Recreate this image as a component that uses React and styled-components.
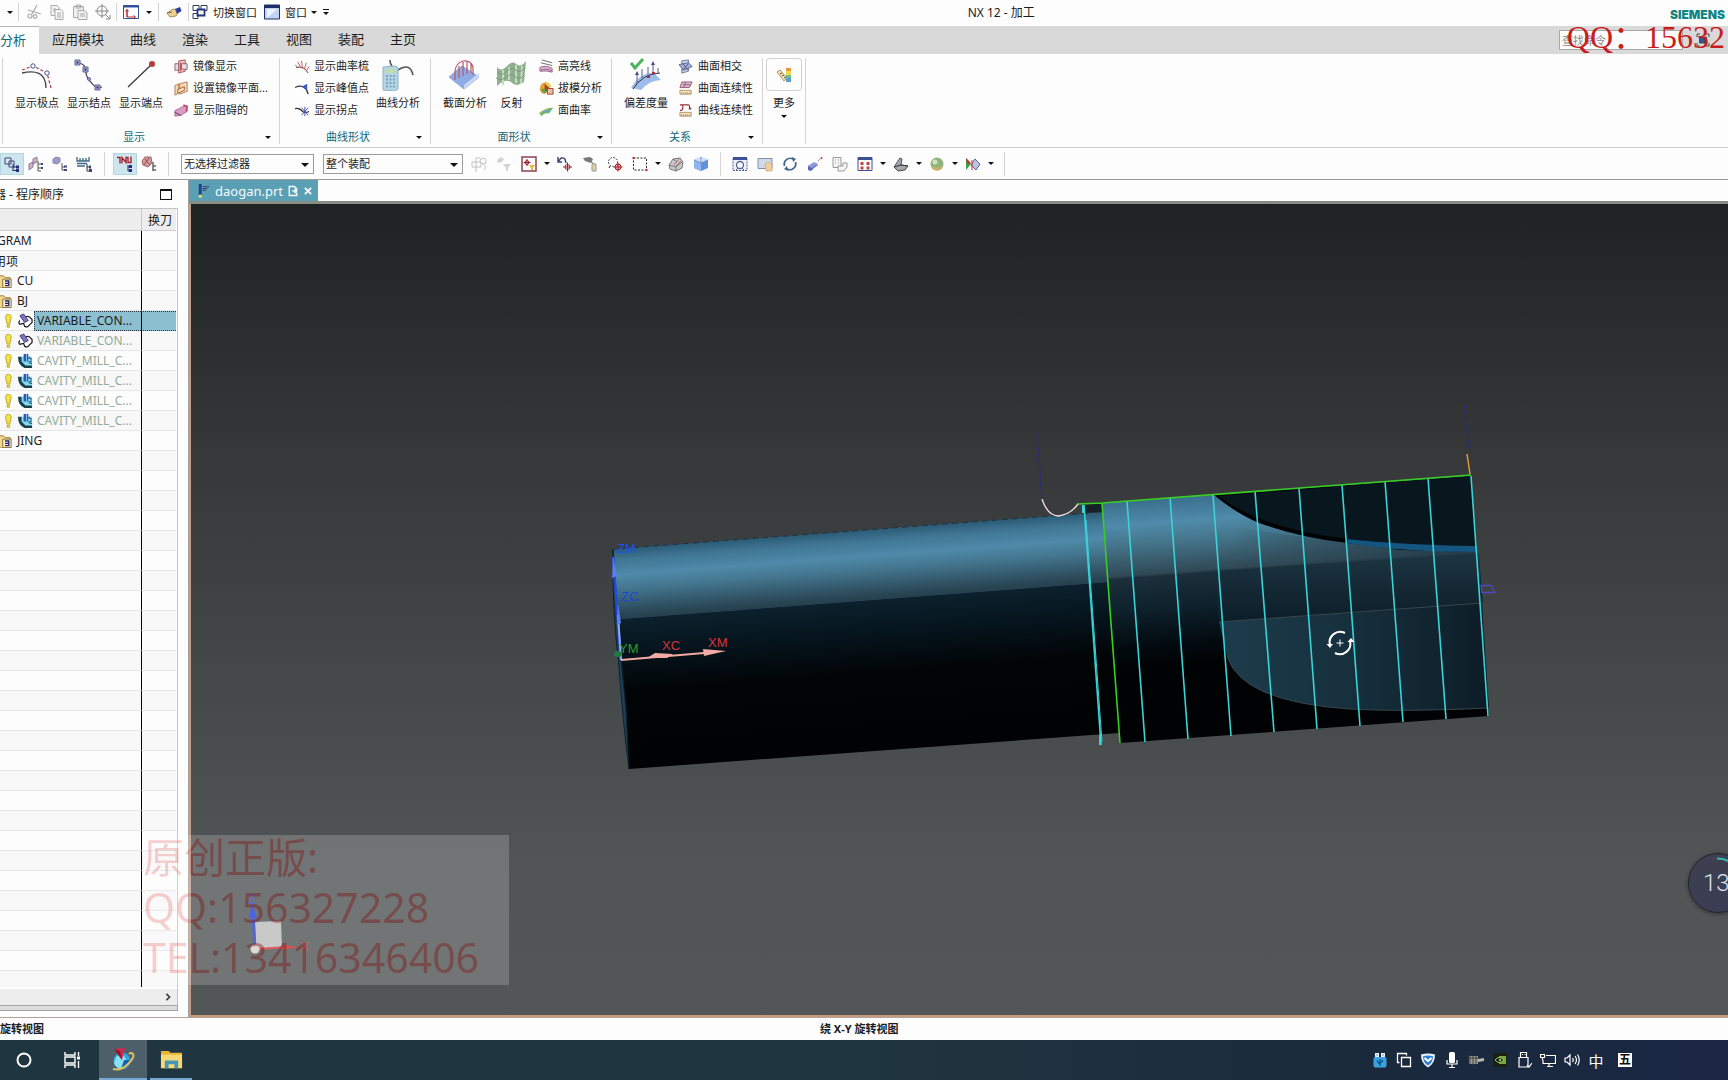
import React from "react";
import styled, { createGlobalStyle, css } from "styled-components";

const GlobalStyle = createGlobalStyle`
  * { box-sizing: border-box; }
  body {
    margin: 0;
    background: #fdfdfd;
    color: #1c1c1c;
    font-family: "Noto Sans", "Noto Sans CJK SC", sans-serif;
    font-size: 12px;
  }
  button, input, select { font: inherit; color: inherit; }
`;

const Window = styled.div`
  position: relative;
  display: flex;
  flex-direction: column;
  height: 100vh;
  min-height: 600px;
  overflow: hidden;
`;

const Glyph = styled.svg`
  display: block;
  flex: none;
  width: ${({ $size }) => $size || 16}px;
  height: ${({ $size }) => $size || 16}px;
  fill: none;
  stroke: none;
  opacity: ${({ $dim }) => ($dim ? 0.5 : 1)};
`;

const CaretSvg = styled.svg`
  display: block;
  width: ${({ $big }) => ($big ? 8 : 6)}px;
  height: ${({ $big }) => ($big ? 4 : 3)}px;
  fill: #111;
`;

const Caret = ({ big }) => (
  <CaretSvg viewBox="0 0 8 4" $big={big} preserveAspectRatio="none">
    <path d="M0 0h8L4 4z" />
  </CaretSvg>
);

const Separator = styled.span`
  flex: none;
  width: 1px;
  height: ${({ $h }) => $h}px;
  background: #d4d4d4;
  margin: 0 ${({ $gap }) => $gap}px;
`;

const FlatButton = styled.button`
  display: flex;
  align-items: center;
  justify-content: center;
  border: 0;
  padding: 0;
  background: transparent;
  white-space: nowrap;
`;

/* ---------- title bar ---------- */

const TitleBar = styled.header`
  display: grid;
  grid-template-columns: 56% 1fr 58px;
  align-items: center;
  height: 26px;
  flex: none;
  padding-bottom: 2px;
`;

const QuickAccess = styled.div`
  display: flex;
  align-items: center;
  padding-left: 4px;
  font-size: 11px;
`;

const QuickButton = styled(FlatButton)`
  min-width: 23px;
  height: 22px;
  gap: 5px;
`;

const CaretButton = styled(FlatButton)`
  width: ${({ $w }) => $w || 11}px;
  height: 20px;
  flex: none;
`;

const OverflowMark = styled(CaretButton)`
  flex-direction: column;
  gap: 2px;
  &::before {
    content: "";
    width: 6px;
    height: 1px;
    background: #111;
  }
`;

const AppTitle = styled.h1`
  margin: 0;
  font-size: 12px;
  font-weight: 400;
`;

const Brand = styled.div`
  overflow: hidden;
  padding-top: 6px;
  color: #0d8584;
  font: 900 12px/16px Inter, "Open Sans", sans-serif;
`;

/* ---------- tabs ---------- */

const TabBar = styled.nav`
  display: flex;
  align-items: stretch;
  height: 28px;
  flex: none;
  background: #d9d9d9;
`;

const Tab = styled.button`
  border: 0;
  padding: 0 13px 3px;
  background: transparent;
  font-size: 13px;
  ${({ $active }) =>
    $active &&
    css`
      padding-left: 0;
      background: #fdfdfd;
      color: #0d6879;
      border-top: 1px solid #b5b5b5;
    `}
`;

const CommandFinder = styled.div`
  display: flex;
  align-items: center;
  gap: 12px;
  margin-left: auto;
  width: 169px;
  overflow: hidden;
`;

const FinderInput = styled.input`
  flex: none;
  width: 124px;
  height: 20px;
  border: 1px solid #a8a8a8;
  background: #fdfdfd;
  padding: 0 2px;
  font-size: 11px;
  &::placeholder {
    color: #8a8a8a;
    opacity: 1;
  }
`;

/* ---------- ribbon ---------- */

const Ribbon = styled.section`
  display: flex;
  height: 94px;
  flex: none;
  padding: 4px 0 3px 2px;
  border-bottom: 1px solid #d0d0d0;
  font-size: 11px;
`;

const RibbonGroup = styled.div`
  display: flex;
  flex-direction: column;
  justify-content: space-between;
  width: ${({ $w }) => $w}px;
  flex: none;
  padding-left: 8px;
  border-left: 1px solid #d4d4d4;
`;

const GroupBody = styled.div`
  display: flex;
`;

const GroupLabel = styled.div`
  display: grid;
  grid-template-columns: 1fr 22px;
  align-items: center;
  height: 14px;
  color: #0d6879;
  line-height: 14px;
  text-align: center;
  svg {
    margin-left: 8px;
  }
`;

const BigButton = styled.button`
  display: flex;
  flex-direction: column;
  align-items: center;
  gap: 4px;
  min-width: 38px;
  padding: 0 4px;
  border: 0;
  background: transparent;
  line-height: 16px;
  white-space: nowrap;
`;

const CommandList = styled.div`
  display: flex;
  flex-direction: column;
  gap: 6px;
  padding: 0 3px 0 7px;
`;

const CommandButton = styled(FlatButton)`
  justify-content: flex-start;
  gap: 4px;
  height: 16px;
  line-height: 16px;
`;

const MoreGroup = styled.div`
  width: 44px;
  flex: none;
  padding: 0 2px;
  border: solid #d4d4d4;
  border-width: 0 1px;
`;

const MoreButton = styled(BigButton)`
  width: 100%;
  padding: 0;
`;

const MoreFrame = styled.span`
  display: grid;
  place-items: center;
  width: 36px;
  height: 33px;
  border: 1px solid #d0d0d8;
  border-radius: 3px;
`;

/* ---------- selection bar ---------- */

const SelectionBar = styled.div`
  display: flex;
  align-items: center;
  height: 32px;
  flex: none;
  border-bottom: 1px solid #989898;
`;

const ToolSet = styled.div`
  display: flex;
  align-items: center;
  gap: ${({ $gap }) => $gap || 0}px;
`;

const FilterSet = styled(ToolSet)`
  padding: 0 4px 0 5px;
`;

const ToolButton = styled(FlatButton)`
  width: 24px;
  height: 22px;
  flex: none;
  ${({ $on }) =>
    $on &&
    css`
      background: #cde6ee;
      border: 1px solid #b4d6e0;
    `}
`;

const SelectBox = styled.label`
  position: relative;
  display: flex;
  width: ${({ $w }) => $w}px;
  flex: none;
  svg {
    position: absolute;
    right: 5px;
    top: 9px;
    pointer-events: none;
  }
`;

const Select = styled.select`
  appearance: none;
  width: 100%;
  height: 20px;
  padding: 0 2px;
  border: 1px solid #9c9c9c;
  border-radius: 0;
  background: #fdfdfd;
  font-size: 11px;
  line-height: 16px;
`;

/* ---------- navigator ---------- */

const WorkArea = styled.main`
  display: flex;
  flex: 1;
  min-height: 0;
`;

const Navigator = styled.aside`
  display: flex;
  flex-direction: column;
  width: 189px;
  flex: none;
  padding: 0 10px 6px 0;
  border-right: 1px solid #a0a0a0;
`;

const NavHeader = styled.div`
  display: flex;
  align-items: center;
  justify-content: space-between;
  height: 28px;
  flex: none;
  padding-right: 6px;
`;

const CutText = styled.span`
  margin-left: -6px;
  white-space: nowrap;
`;

const RestoreIcon = styled.span`
  width: 12px;
  height: 11px;
  border: 1px solid #111;
  border-top-width: 2px;
`;

const TreeScroll = styled.div`
  flex: 1;
  min-height: 0;
  overflow: hidden;
  border: solid #c4c4c4;
  border-width: 1px 1px 0 0;
  padding-right: 1px;
`;

const Tree = styled.table`
  width: 100%;
  table-layout: fixed;
  border-collapse: separate;
  border-spacing: 0;
  th {
    height: 22px;
    padding: 0 0 0 2px;
    background: #ededed;
    border-bottom: 1px solid #cfcfcf;
    font-weight: 400;
  }
  th + th {
    width: 35px;
    border-left: 1px solid #c8c8c8;
  }
  td {
    height: 20px;
    padding: 0;
    border-bottom: 1px solid #e6e6e6;
  }
  td + td {
    border-left: 1px solid #000;
  }
`;

const TreeRow = styled.tr`
  background: #fdfdfd;
  &:nth-child(even) {
    background: #f8f8f8;
  }
  ${({ $selected }) =>
    $selected &&
    css`
      td + td {
        background: #8cc0d0;
        border-top: 1px dotted #234;
        border-bottom: 1px dotted #234;
      }
    `}
`;

const Node = styled.div`
  display: flex;
  align-items: center;
  height: 19px;
  margin-left: ${({ $shift }) => $shift || 0}px;
  white-space: nowrap;
  color: ${({ $faded }) => ($faded ? "#93ab9b" : "#1c1c1c")};
`;

const NodeLabel = styled.span`
  padding-left: ${({ $pad }) => $pad ?? 4}px;
  ${({ $selected }) =>
    $selected &&
    css`
      flex: 1;
      height: 20px;
      margin-left: 1px;
      line-height: 18px;
      background: #8cc0d0;
      border: 1px dotted #234;
      border-right: 0;
      padding-left: 2px;
    `}
`;

const ScrollFoot = styled.div`
  display: flex;
  align-items: center;
  justify-content: flex-end;
  height: 18px;
  flex: none;
  padding-right: 5px;
  background: #ededed;
  border-right: 1px solid #c4c4c4;
  border-top: 2px solid #fdfdfd;
`;

const Splitter = styled.div`
  height: 6px;
  flex: none;
  background: #dcdcdc;
  border: 1px solid #a4a4a4;
  border-left: 0;
`;

/* ---------- graphics window ---------- */

const Graphics = styled.section`
  display: flex;
  flex-direction: column;
  flex: 1;
  min-width: 0;
`;

const PartTabs = styled.div`
  display: flex;
  height: 24px;
  flex: none;
  border-bottom: 3px solid #858d84;
`;

const PartTab = styled.button`
  display: flex;
  align-items: center;
  gap: 4px;
  width: 129px;
  padding: 0 6px 0 7px;
  border: 0;
  background: #5a9fb3;
  color: #f4fafc;
  font-size: 13px;
  line-height: 18px;
`;

const Viewport = styled.div`
  flex: 1;
  min-height: 0;
  border: solid #c99b7c;
  border-width: 0 0 2px 2px;
  background: linear-gradient(#1f2223, #353738 30%, #474a4b 62%, #525555 82%, #535656);
`;

const Scene = styled.svg`
  display: block;
  width: 100%;
  height: 100%;
  fill: none;
  font-family: "Liberation Sans", sans-serif;
  font-size: 13px;
`;

/* ---------- bottom bars ---------- */

const StatusBar = styled.footer`
  display: grid;
  grid-template-columns: 820fr 908fr;
  align-items: center;
  height: 23px;
  flex: none;
  padding-bottom: 2px;
  border-top: 1px solid #b0a49c;
  font-size: 11px;
  font-weight: 700;
  white-space: nowrap;
`;

const Taskbar = styled.div`
  display: flex;
  justify-content: space-between;
  height: 40px;
  flex: none;
  background: linear-gradient(90deg, #1f353f, #1f353f 50%, #1a2a3c 80%, #1a2643);
`;

const TaskApps = styled.div`
  display: flex;
`;

const TaskButton = styled(FlatButton)`
  width: 48px;
`;

const RunningButton = styled(TaskButton)`
  width: ${({ $active }) => ($active ? 48 : 42)}px;
  margin-left: 3px;
  border-bottom: 2px solid #76a9d3;
  background: ${({ $active }) => ($active ? "#4d6069" : "transparent")};
`;

const Tray = styled.div`
  display: flex;
  align-items: center;
  padding-right: 91px;
  color: #fff;
  font-size: 15px;
`;

const TrayButton = styled(FlatButton)`
  width: 24px;
  height: 100%;
  &:last-child {
    margin-left: 5px;
  }
`;

const ImeMode = styled.span`
  width: 14px;
  height: 14px;
  background: #fff;
  color: #111;
  font-size: 12px;
  font-weight: 700;
  line-height: 13px;
`;

/* ---------- overlays ---------- */

const ContactTop = styled.div`
  position: absolute;
  top: 19px;
  right: 3px;
  color: #c91d1d;
  font: 32px/36px "Liberation Serif", "Noto Sans CJK SC", serif;
  white-space: nowrap;
`;

const ContactBox = styled.div`
  position: absolute;
  left: 143px;
  bottom: 95px;
  width: 366px;
  height: 150px;
  background: rgba(255, 255, 255, 0.19);
`;

const ContactText = styled.p`
  margin: 0;
  padding-bottom: 6px;
  font-size: 41px;
  line-height: 44px;
  white-space: nowrap;
  color: transparent;
  background: linear-gradient(90deg, rgba(225, 60, 60, 0.24) 48px, rgba(125, 10, 10, 0.38) 48px);
  background-clip: text;
`;

const SpeedBall = styled.div`
  position: absolute;
  right: -20px;
  bottom: 167px;
  display: flex;
  align-items: center;
  width: 60px;
  height: 60px;
  padding-left: 14px;
  border: 1px solid #20212d;
  border-radius: 50%;
  background: linear-gradient(#3d4050, #3b3d54);
  box-shadow: 0 1px 4px rgba(0, 0, 0, 0.4);
  color: #dfe2ea;
  font: 300 24px Roboto, sans-serif;
  svg {
    position: absolute;
    left: 28px;
    top: 3px;
  }
`;

/* ---------- icon artwork ---------- */

const art = {
  cut: (
    <g stroke="#aaa" strokeWidth="1.200">
      <path d="M11 1 6 10M2 6l13 4" />
      <circle cx="4" cy="12" r="2" />
      <circle cx="9" cy="12.500" r="1.800" />
    </g>
  ),
  copy: (
    <g stroke="#aaa" fill="#f4f4f4">
      <path d="M2 1.500h6l2 2v8H2zM4 5h3M4 7h2" />
      <path d="M6 5.500h6l2 2v8H6zM8 9h4M8 11h4M8 13h4" />
    </g>
  ),
  paste: (
    <g stroke="#aaa" fill="#f0f0f0">
      <path d="M1.500 2.500h10v11h-10zM4 1h5v3H4z" />
      <path d="M6 6.500h6l3 2v7H6zM8 10h5M8 12h5" />
    </g>
  ),
  target: (
    <g stroke="#888">
      <circle cx="7" cy="7" r="5" />
      <path d="M7 0v14M0 7h14M10 10l5 5m0-4v4h-4" />
    </g>
  ),
  axisBox: (
    <>
      <path d="M.5 1.500h15v13H.5z" fill="#fff" stroke="#33509c" />
      <path d="M.5 1h15v2.500H.5z" fill="#33509c" />
      <path d="M4 6v7h8M4 13V5.500M2.500 7.500 4 5.500l1.500 2M10.500 11.500l2 1.500-2 1.500" stroke="#b22" />
    </>
  ),
  hand: (
    <>
      <path d="M1 9l6-4 6 1-3 6-6 1z" fill="#eccf94" stroke="#8a6a30" strokeWidth=".7" />
      <path d="M9 5l5-2 1.500 4L11 10z" fill="#2d3f9e" />
      <path d="M1 9l5-1" stroke="#8a6a30" />
    </>
  ),
  switchWin: (
    <g stroke="#333c58" fill="#fff">
      <path d="M1 1.500h6v5H1zM9 1.500h6v5H9zM1 9.500h5v5H1z" />
      <path d="M5.500 5.500h7v6h-7z" strokeWidth="1.800" stroke="#23357c" />
    </g>
  ),
  window: (
    <>
      <path d="M.5 1h15v14H.5z" fill="#c3d4f2" stroke="#1c2f6e" />
      <path d="M3 5l10 0-10 9z" fill="#eef4ff" />
      <path d="M.5 1h15v3H.5z" fill="#1c2f6e" />
    </>
  ),
  fit: (
    <g stroke="#444">
      <path d="M2 5V2h3M11 2h3v3M14 11v3h-3M5 14H2v-3" />
      <path d="M4.500 5h7v6h-7z" fill="#345a9c" />
    </g>
  ),
  poles: (
    <>
      <path d="M1 15C14 12 25 14 25 30" stroke="#444" strokeWidth="1.300" />
      <path d="M1 12 12 8l14 7 4 15" stroke="#a33848" strokeDasharray="3 2" strokeWidth="1.200" />
      <g fill="#fff" stroke="#3d4fa0">
        <circle cx="12" cy="8" r="2.200" />
        <circle cx="26" cy="15" r="2.200" />
      </g>
    </>
  ),
  knots: (
    <>
      <path d="M4 4C18 8 9 14 16 22s6 8 13 7" stroke="#444" strokeWidth="1.200" />
      <g fill="#a9afdc" stroke="#5a63a4">
        <path d="M2 2h5v5H2zM10 9h5v5h-5zM22 27h5v5h-5z" />
        <circle cx="16" cy="21" r="1.500" />
      </g>
      <path d="M3.500 3.500h2v2h-2zM11.500 10.500h2v2h-2zM23.500 28.500h2v2h-2z" fill="#334" />
    </>
  ),
  endpoint: (
    <>
      <path d="M3 29 26 7" stroke="#3a3a3a" strokeWidth="1.300" />
      <circle cx="27" cy="6" r="3" fill="#b8393c" />
    </>
  ),
  curveCalc: (
    <>
      <path d="M8 2q0 4 2 6M16 12q12-8 15 5" stroke="#555" strokeWidth="1.600" />
      <path d="M1 9l13-1 2 2v21l-3 2-12-1z" fill="#b4d6e4" stroke="#8fb0c0" />
      <path d="M4 11h9v4H4z" fill="#bfdcae" />
      <path d="M4 18h9M4 21.500h9M4 25h9M4 28.500h9" stroke="#7ba4be" strokeWidth="1.800" strokeDasharray="2 1.500" />
    </>
  ),
  section: (
    <>
      <path d="M0 19 13 8l17 11-15 12z" fill="#8fabe6" stroke="#8da3d6" />
      <path d="M15 31 30 19v-4L15 27z" fill="#c9d8f5" />
      <path d="M6 22v-9Q7 5 14 3q8-1 10 6v8M10 20V8M14 18V4M18 16V3M22 15V6" stroke="#b5586c" strokeWidth="1.200" />
    </>
  ),
  reflect: (
    <>
      <path d="M2 9c8 9 12-10 19-3q5 4 10-3l-2 21q-8 6-13 0-6-4-14 4z" fill="#8fb08f" />
      <path d="M8 12v15M14 9v13M21 7v18M27 8l-1 18" stroke="#c6dcc2" strokeWidth="2" />
      <path d="M2 14c8 8 12-9 18-2q6 4 10-3M1 20c9 6 13-8 18-2q6 5 10-1" stroke="#789c7b" />
    </>
  ),
  deviation: (
    <>
      <path d="M1 30Q10 14 24 15l7 7Q20 22 11 32z" fill="#9dbcec" />
      <path d="M3 31Q12 16 30 15" stroke="#333" />
      <path d="M7 25V15M12 20v-9M18 18V9M23 17V5M28 16v-6" stroke="#5a5a94" />
      <path d="M21 7l2-4 2 4zM5 17l2-4 2 4z" fill="#4a4a8c" />
      <path d="M1 5l4 5L13 1" stroke="#4ab558" strokeWidth="3" />
      <path d="M17 19h3M22 15h3" stroke="#b03040" strokeWidth="2" />
    </>
  ),
  mirror: (
    <>
      <path d="M5 2l7-1v12l-7 2z" fill="#f0bcb6" stroke="#a3585a" />
      <path d="M1 5h4v7H1zM8 5h6v6H8z" fill="#e9dadf" stroke="#8a6470" />
      <path d="M7 4v9" stroke="#b84246" />
    </>
  ),
  mirrorPlane: (
    <>
      <path d="M1 5l4-2v10l-4 2zM6 3l8-2v10l-8 3z" fill="#f5dcb4" stroke="#b9764c" />
      <path d="M4 9l7-3v4l-7 3z" fill="#f5e4b8" stroke="#a85e4a" />
    </>
  ),
  obstruct: (
    <>
      <path d="M1 8q5-2 8-4l5-1v6q-4 2-6 4l-7 1z" fill="#d79ec2" stroke="#a8689a" />
      <path d="M10 2l4 2-1 5" stroke="#c24452" strokeWidth="1.500" />
      <path d="M1 10l6 3" stroke="#68345c" />
    </>
  ),
  comb: (
    <>
      <path d="M1 9q9-2 13 6" stroke="#444" />
      <path d="M3 9 0 6M6 9 3 3M8 10 7 2M10 11l2-7M12 13l3-5" stroke="#b85a60" />
    </>
  ),
  peak: (
    <>
      <path d="M0 7q6-3 10 0 3 2 4 7" stroke="#333" strokeWidth="1.300" />
      <path d="M7 6l6-3v7z" fill="#4258c4" />
    </>
  ),
  inflect: (
    <>
      <path d="M0 6q5-1 8 3 3 2 7 0" stroke="#333" strokeWidth="1.300" />
      <path d="M7 5l7 8M14 5l-7 8M10.500 4v10" stroke="#4152ac" />
    </>
  ),
  highlight: (
    <>
      <path d="M2 4l12 3M3 1l11 3" stroke="#666" />
      <path d="M1 9q6-3 13 1v4q-6-2-13-1z" fill="#dfb4d0" stroke="#95608a" />
      <path d="M2 12q6-3 12 1" stroke="#95608a" />
    </>
  ),
  draft: (
    <>
      <path d="M1 8q0-6 7-7l1 8-3 5q-5-1-5-6z" fill="#e8a032" />
      <path d="M8 1q5 1 5 6H8z" fill="#e9d04a" />
      <path d="M6 3l6 5-6 5z" fill="#a34a2c" />
      <path d="M2 9q2 4 6 4l-2-5z" fill="#59a845" />
      <path d="M9 8h6v6H9z" fill="#e6c2a8" stroke="#a33b32" />
    </>
  ),
  faceCurv: (
    <>
      <path d="M0 11q5-6 15-6l-4 6q-6-1-8 3z" fill="#72b868" />
      <path d="M4 9q4-2 8-3l-2 3q-3 0-6 2z" fill="#6a9edd" />
      <path d="M1 11q4-4 9-5" stroke="#c8cf5a" />
    </>
  ),
  faceCross: (
    <>
      <path d="M3 2l7-1v12l-7 2z" fill="#ccd4e6" stroke="#6a749a" />
      <path d="M0 6l10-2 4 4-9 4z" fill="#a3b3dd" stroke="#5a6590" />
      <path d="M4 5l6 7M10 5l-6 7" stroke="#5a4a78" />
    </>
  ),
  faceCont: (
    <>
      <path d="M3 1h11l-3 6H1z" fill="#e8b3c0" stroke="#985678" />
      <path d="M7 1 5 7M4 4h9" stroke="#6f6da3" />
      <path d="M1 10h12v4H1z" fill="#f6e8cb" stroke="#b4935f" />
      <path d="M3 12v2M5 12v2M7 12v2M9 12v2M11 12v2" stroke="#b4935f" />
    </>
  ),
  curveCont: (
    <>
      <path d="M1 2h9q2 0 1 5M4 2v3q0 3-3 3M11 4l2 3" stroke="#983038" strokeWidth="1.200" />
      <path d="M1 10h12v4H1z" fill="#f6e8cb" stroke="#b4935f" />
      <path d="M3 12v2M5 12v2M7 12v2M9 12v2M11 12v2" stroke="#b4935f" />
    </>
  ),
  more: (
    <>
      <path d="M1 5l3-2 7 8-3 3z" fill="#f4dfb6" stroke="#a9814b" strokeWidth=".8" />
      <path d="M4 7l2-1M6 9l2-1M8 11l2-1" stroke="#6a5030" />
      <path d="M10 1h5v4h-5z" fill="#e9953a" />
      <path d="M10 4h5v4h-5z" fill="#f0d844" />
      <path d="M10 8h5v3h-5z" fill="#6fbf9b" />
      <path d="M10 11h5v4h-5z" fill="#5b9cc9" />
    </>
  ),
  treeA: (
    <>
      <path d="M1 2h6v6H1zM5 5h5v6H5z" fill="#dfe8f2" stroke="#34447a" />
      <path d="M9 8v7M9 11h4M9 14.500h4" stroke="#222a66" />
      <path d="M12 9.500h3v3h-3zM12 13h3v3h-3z" fill="#26307a" />
    </>
  ),
  treeB: (
    <>
      <path d="M1 8l4-2v5l-4 3zM5 3l4-2v5L5 8z" fill="#d9aeb4" stroke="#7c7fa6" />
      <path d="M10 5v10M10 8h3M10 12h3M10 15h3" stroke="#555" />
      <path d="M13 7h2v2h-2zM13 11h2v2h-2z" fill="#3d477f" />
    </>
  ),
  treeC: (
    <>
      <path d="M1 3l3-2 4 1v4L5 8 1 7z" fill="#9a99ca" stroke="#8a8ab0" />
      <path d="M10 7v7h3M10 11h3" stroke="#555" />
      <path d="M12 9.500h3v2h-3zM12 13h3v2h-3z" fill="#3d477f" />
    </>
  ),
  treeD: (
    <>
      <path d="M1 1v4h12V1M4 2v3M7 2v3M10 2v3M1 7.500h10M1 10h8" stroke="#3e6886" strokeWidth="1.300" />
      <path d="M11 8v7M11 11h3M11 15h3" stroke="#333" />
      <path d="M13 9.500h2v3h-2zM13 13h3v3h-3z" fill="#3d477f" />
    </>
  ),
  snapA: (
    <>
      <path d="M0 1.500h3v6M5 7.500v-6l4 5v-5h2v5h3v-6" stroke="#a32430" strokeWidth="1.400" />
      <path d="M11 9v6M11 11h3M11 15h3" stroke="#222a66" />
      <path d="M12 9h3v3h-3zM12 13h3v3h-3z" fill="#26307a" />
    </>
  ),
  snapB: (
    <>
      <path d="M1 5l3-4 6 0 1 6-4 4-5-2z" fill="#d29a9e" stroke="#a06468" />
      <path d="M4 3l5 6M8 2 3 9" stroke="#8f5056" />
      <path d="M12 6v9M12 10h3M12 14h3" stroke="#666" strokeWidth="1.500" />
    </>
  ),
  grayBox: (
    <g stroke="#888">
      <path d="M1 6h9v5H1zM5 2v14M5 2h4" />
      <circle cx="12" cy="5" r="3" />
      <path d="M12 8q4 2 1 6" />
    </g>
  ),
  grayFunnel: (
    <g fill="#aaa">
      <path d="M1 4l4-3 3 2-2 3-4 1zM7 8h8l-3 4v3h-2v-3z" />
    </g>
  ),
  filterBox: (
    <>
      <path d="M1 1h14v14H1z" fill="#fff" stroke="#8e4250" strokeWidth="1.500" />
      <path d="M6 3v7M2.500 6.500h7" stroke="#a02030" />
      <circle cx="6" cy="6.500" r="2" stroke="#a02030" />
      <path d="M8 9h6l-2 3v2h-2v-2z" fill="#e9b93a" />
    </>
  ),
  undoPoint: (
    <>
      <path d="M2 5q2-5 6-2l1 4M1 1v5h4" stroke="#31426f" strokeWidth="1.400" />
      <circle cx="10.500" cy="11" r="2.500" stroke="#a02430" />
      <path d="M10.500 6.500v9M6 11h9" stroke="#a02430" />
    </>
  ),
  pointers: (
    <>
      <path d="M1 2l7-1 3 2-2 4-6-2z" fill="#777" />
      <path d="M7 5l4 2 1 8" stroke="#777" />
      <path d="M10 8h4v7h-4z" fill="#e0d49c" stroke="#999" />
    </>
  ),
  dottedTarget: (
    <>
      <circle cx="6" cy="6" r="4.500" stroke="#222" strokeDasharray="1.500 1.500" />
      <path d="M3 10l-1 2" stroke="#222" />
      <circle cx="11" cy="11" r="3" stroke="#a02430" fill="#e8b0b4" />
      <path d="M11 6.500v9M6.500 11h9" stroke="#a02430" />
    </>
  ),
  marquee: (
    <>
      <path d="M1.500 2h13v12h-13z" stroke="#222" strokeDasharray="2 1.500" />
      <circle cx="1.500" cy="2" r="1.200" fill="#c33" />
      <circle cx="14.500" cy="14" r="1.200" fill="#c33" />
    </>
  ),
  solid: (
    <>
      <path d="M1 9l4-6 7-1 3 4-1 6-6 3-6-2z" fill="#c9c9cb" stroke="#777" />
      <path d="M1 9l7 2v4M8 11l6-5M5 3l4 3" stroke="#777" />
      <path d="M6 9l5-6M8 10l5-5" stroke="#b4696c" />
    </>
  ),
  cube: (
    <>
      <path d="M1 4l7-3 7 3v8l-7 3-7-3z" fill="#5f91dc" />
      <path d="M1 4l7 3v8l-7-3z" fill="#8fb6ee" />
      <path d="M1 4l7-3 7 3-7 3z" fill="#d3e2f8" />
      <path d="M8 1v6M1 4l7 3 7-3" stroke="#5c88c8" strokeWidth=".8" />
    </>
  ),
  zoomFit: (
    <>
      <path d="M1 1.500h14v13H1z" fill="#eef2fb" stroke="#4c5f9a" strokeDasharray="2 1" />
      <path d="M1 1h14v3H1z" fill="#3d5196" />
      <circle cx="8" cy="9" r="3.500" fill="#fff" stroke="#51639c" strokeWidth="1.300" />
      <path d="M4 14l2-2M12 14l-2-2" stroke="#51639c" />
    </>
  ),
  panView: (
    <>
      <path d="M1 2.500h14v10H1z" fill="#cfd9e8" stroke="#8590a8" />
      <path d="M8 8l3-2 4 3v6H9z" fill="#f0d09c" stroke="#c8a060" strokeWidth=".6" />
    </>
  ),
  rotate: (
    <>
      <path d="M2.500 10A6 6 0 0 1 11 3M13.500 6A6 6 0 0 1 5 13" stroke="#44618a" strokeWidth="1.700" />
      <path d="M10 1l4 2-3 3zM6 15l-4-2 3-3z" fill="#44618a" />
    </>
  ),
  prism: (
    <>
      <path d="M1 10l6-3 4 2-4 3-3 3-3-1z" fill="#5968b8" />
      <path d="M1 10l6-4 4 2-6 4z" fill="#8f9ade" />
      <path d="M11 5l3-3" stroke="#44a" strokeDasharray="1 1" />
      <circle cx="14.500" cy="2" r="1" fill="#c33" />
    </>
  ),
  docView: (
    <g stroke="#999" fill="#f4f4f4">
      <path d="M1 1.500h8v10H1zM3 4h1M6 4h1M3 7h1M6 7h1" />
      <path d="M6 10h5V7h4v4l-3 4H6z" />
    </g>
  ),
  fourView: (
    <>
      <path d="M1 1.500h14v13H1z" fill="#fff" stroke="#3d5090" />
      <path d="M1 1h14v3H1z" fill="#3d5090" />
      <path d="M3.500 6h3v3h-3zM9.500 6h3v3h-3zM3.500 10.500h3v3h-3zM9.500 10.500h3v3h-3z" fill="#c2423e" />
    </>
  ),
  clip: (
    <>
      <path d="M1 11l6-9 2 1-1 6 7 1-3 4-7 1z" fill="#a4a9ae" stroke="#4c5056" />
      <path d="M1 11l7-2 7 1" stroke="#333" />
    </>
  ),
  ball: (
    <>
      <circle cx="8" cy="8" r="6.500" fill="#8fb47e" />
      <circle cx="6" cy="6" r="2.500" fill="#cfe2c4" />
      <path d="M2 10q6 3 12 0-1 4.500-6 4.500T2 10z" fill="#c9b16a" />
    </>
  ),
  cutPlane: (
    <>
      <path d="M1 2l5 6-5 6z" fill="#3fa049" />
      <path d="M1 2l5 5-4 1z" fill="#c33232" />
      <path d="M6 9l4-6 5 5-4 6z" fill="#b8c4e2" stroke="#56639c" />
      <path d="M7 4v10" stroke="#c33232" />
    </>
  ),
  folder: (
    <>
      <path d="M0 3h6l2 2h5v11H0z" fill="#f2d98c" stroke="#96793a" />
      <path d="M5 6.500h9v9H5z" fill="#f6efd0" stroke="#8a6e3c" />
      <path d="M7.500 8.500h4v5h-4M7.500 11h4" stroke="#25246e" strokeWidth="1.400" />
    </>
  ),
  bulb: (
    <>
      <path d="M5 .5q4 0 3 4.500L6.500 11.500h-3L2 5Q1 .5 5 .5z" fill="#f3e545" stroke="#b39b2c" />
      <circle cx="5" cy="14" r="1.600" fill="#f3e545" stroke="#b39b2c" />
    </>
  ),
  contour: (
    <>
      <path d="M2 8q-2 2 0 4l4-1 1 3q3 2 5-1l3-3V7l-3-3q-3-1-4 1" fill="#fff" stroke="#1e1e1e" strokeWidth="1.300" />
      <path d="M2 3l4-2 5 7-4 2z" fill="#7c75c4" stroke="#3f3b76" />
    </>
  ),
  cavity: (
    <>
      <path d="M0 4h4v5l4 4h7v3H7Q0 13 0 4z" fill="#184048" />
      <path d="M4 4h11v9H8L4 9z" fill="#7bdcf4" />
      <path d="M6 1h5v8H6z" fill="#2b55b4" />
      <path d="M9 1v8" stroke="#9cc2f4" />
      <path d="M12 4v2h2v3h-2v2h3" stroke="#123" strokeDasharray="2 1" />
    </>
  ),
  partMark: (
    <>
      <path d="M3 1h3v13H3z" fill="#1d3f8c" />
      <path d="M7 4h7M7 6h5M7 8h3" stroke="#3a3f78" strokeWidth="1.200" />
      <circle cx="4.500" cy="14" r="1.800" fill="#e8e070" />
    </>
  ),
  pageMark: (
    <path d="M13 10v4H3V2h7l3 3v2M7 8h5M10 5l3 3-3 3" stroke="#f4fafc" strokeWidth="1.800" />
  ),
  close: <path d="M3 3l10 10M13 3 3 13" stroke="#f4fafc" strokeWidth="3" />,
};

const Icon = ({ name, size = 16, box = 16, dim }) => (
  <Glyph viewBox={`0 0 ${box} ${box}`} $size={size} $dim={dim} aria-hidden="true">
    {art[name]}
  </Glyph>
);

/* ---------- data ---------- */

const tabs = ["分析", "应用模块", "曲线", "渲染", "工具", "视图", "装配", "主页"];

const groups = [
  {
    label: "显示",
    width: 277,
    big: [["poles", "显示极点"], ["knots", "显示结点"], ["endpoint", "显示端点"]],
    list: [["mirror", "镜像显示"], ["mirrorPlane", "设置镜像平面..."], ["obstruct", "显示阻碍的"]],
  },
  {
    label: "曲线形状",
    width: 151,
    listFirst: true,
    big: [["curveCalc", "曲线分析"]],
    list: [["comb", "显示曲率梳"], ["peak", "显示峰值点"], ["inflect", "显示拐点"]],
  },
  {
    label: "面形状",
    width: 181,
    big: [["section", "截面分析"], ["reflect", "反射"]],
    list: [["highlight", "高亮线"], ["draft", "拔模分析"], ["faceCurv", "面曲率"]],
  },
  {
    label: "关系",
    width: 151,
    big: [["deviation", "偏差度量"]],
    list: [["faceCross", "曲面相交"], ["faceCont", "曲面连续性"], ["curveCont", "曲线连续性"]],
  },
];

// "v" marks a drop-down arrow after the icon before it
const pickTools = ["grayBox", "grayFunnel", "filterBox", "v", "undoPoint", "pointers", "dottedTarget", "marquee", "v", "solid", "cube"];
const viewTools = ["zoomFit", "panView", "rotate", "prism", "docView", "fourView", "v", "clip", "v", "ball", "v", "cutPlane", "v"];

const operations = [
  { text: "GRAM", shift: -3, pad: 0 },
  { text: "用项", shift: -6, pad: 0 },
  { text: "CU", icon: "folder" },
  { text: "BJ", icon: "folder" },
  { text: "VARIABLE_CON...", icon: "contour", op: true, selected: true },
  { text: "VARIABLE_CON...", icon: "contour", op: true, faded: true },
  { text: "CAVITY_MILL_C...", icon: "cavity", op: true, faded: true },
  { text: "CAVITY_MILL_C...", icon: "cavity", op: true, faded: true },
  { text: "CAVITY_MILL_C...", icon: "cavity", op: true, faded: true },
  { text: "CAVITY_MILL_C...", icon: "cavity", op: true, faded: true },
  { text: "JING", icon: "folder" },
];

const sections = [
  [1083, 505, 1100, 745],
  [1126, 501, 1144, 742],
  [1169, 497, 1187, 739],
  [1212, 495, 1230, 736],
  [1254, 491, 1273, 732],
  [1298, 488, 1316, 729],
  [1341, 485, 1359, 726],
  [1384, 481, 1402, 722],
  [1427, 478, 1445, 719],
  [1470, 476, 1487, 716],
];

/* ---------- parts ---------- */

const CommandGroup = ({ group }) => {
  const list = (
    <CommandList>
      {group.list.map(([icon, text]) => (
        <CommandButton key={text}>
          <Icon name={icon} size={15} />
          {text}
        </CommandButton>
      ))}
    </CommandList>
  );
  return (
    <RibbonGroup $w={group.width}>
      <GroupBody>
        {group.listFirst && list}
        {group.big.map(([icon, text]) => (
          <BigButton key={text}>
            <Icon name={icon} size={33} box={33} />
            {text}
          </BigButton>
        ))}
        {!group.listFirst && list}
      </GroupBody>
      <GroupLabel>
        {group.label}
        <Caret />
      </GroupLabel>
    </RibbonGroup>
  );
};

const Tools = ({ items }) => (
  <ToolSet $gap={1}>
    {items.map((name, i) =>
      name === "v" ? (
        <CaretButton key={i} $w={10} aria-label="更多选项">
          <Caret />
        </CaretButton>
      ) : (
        <ToolButton key={i} aria-label={name}>
          <Icon name={name} dim={name.startsWith("gray")} />
        </ToolButton>
      )
    )}
  </ToolSet>
);

const OperationTree = () => (
  <TreeScroll>
    <Tree>
      <thead>
        <tr>
          <th aria-label="名称" />
          <th>换刀</th>
        </tr>
      </thead>
      <tbody>
        {operations.map((row, i) => (
          <TreeRow key={i} $selected={row.selected}>
            <td>
              <Node $shift={row.op ? 4 : row.icon ? -2 : row.shift} $faded={row.faded}>
                {row.op && <Icon name="bulb" size={14} />}
                {row.icon && <Icon name={row.icon} size={15} />}
                <NodeLabel $pad={row.pad} $selected={row.selected}>{row.text}</NodeLabel>
              </Node>
            </td>
            <td />
          </TreeRow>
        ))}
        {Array.from({ length: 27 }, (_, i) => (
          <TreeRow key={`empty-${i}`}>
            <td />
            <td />
          </TreeRow>
        ))}
      </tbody>
    </Tree>
  </TreeScroll>
);

const Model = () => (
  <Scene viewBox="190 204 1537 811" preserveAspectRatio="xMidYMid meet">
    <defs>
      <linearGradient id="shaft" gradientUnits="userSpaceOnUse" x1="612" y1="549" x2="628.600" y2="768">
        <stop offset="0" stopColor="#2b5a75" />
        <stop offset=".05" stopColor="#3f7693" />
        <stop offset=".12" stopColor="#4e8aa9" />
        <stop offset=".18" stopColor="#447790" />
        <stop offset=".3" stopColor="#294554" />
        <stop offset=".32" stopColor="#26404d" />
        <stop offset=".323" stopColor="#0b212d" />
        <stop offset=".45" stopColor="#06161f" />
        <stop offset=".65" stopColor="#020507" />
        <stop offset="1" stopColor="#000203" />
      </linearGradient>
      <linearGradient id="head" gradientUnits="userSpaceOnUse" x1="1102" y1="503" x2="1120" y2="743">
        <stop offset="0" stopColor="#3a6f8d" />
        <stop offset=".1" stopColor="#4f8baa" />
        <stop offset=".17" stopColor="#46788f" />
        <stop offset=".31" stopColor="#304854" />
        <stop offset=".32" stopColor="#1b303c" />
        <stop offset=".45" stopColor="#0e212c" />
        <stop offset=".6" stopColor="#030b10" />
        <stop offset=".7" stopColor="#000203" />
        <stop offset="1" stopColor="#000203" />
      </linearGradient>
      <linearGradient id="headFade" x1="0" x2="1">
        <stop offset="0" stopColor="#2c4655" stopOpacity="0" />
        <stop offset="1" stopColor="#263e4b" />
      </linearGradient>
      <linearGradient id="lowerBand" x1="0" x2="0" y1="0" y2="1">
        <stop offset="0" stopColor="#1d3542" />
        <stop offset="1" stopColor="#0c1d28" />
      </linearGradient>
      <linearGradient id="pocket" x1="0" x2="1">
        <stop offset="0" stopColor="#1d3c4b" />
        <stop offset=".5" stopColor="#162f3c" />
        <stop offset="1" stopColor="#0d1d27" />
      </linearGradient>
    </defs>

    {/* shaft */}
    <path d="M612 549 1101 512 1118 733 628 769z" fill="url(#shaft)" />
    <path d="M612 549q-1 60 6 118 4 58 10 102l-3-60-6-60z" fill="#1c3f56" stroke="#0c2330" />
    <path d="M612 549 1090 513" stroke="#1c3440" strokeDasharray="6 4" />
    <path d="M1083 505 1101 503 1102 512 1084 513z" fill="#162229" />

    {/* head */}
    <path d="M1101 503 1470 475 1488 716 1119 743z" fill="url(#head)" />
    <path d="M1240 528 1345 543 1400 550 1477 552 1477 554 1220 571z" fill="url(#headFade)" />
    <path d="M1220 571 1478 553 1482 603 1218 622 1215 598z" fill="url(#lowerBand)" />
    <path d="M1213 495 1470 476 1476 552 1400 550 1346 543Q1300 538 1258 523 1236 514 1213 495z" fill="#010304" />
    <path d="M1217 496 1470 476 1476 547Q1400 545 1347 539 1300 534 1262 520 1240 512 1217 496z" fill="#08161d" />
    <path d="M1347 539Q1400 545 1476 546L1477 552Q1400 552 1346 543z" fill="#155681" />
    <path d="M1218 622 1481 603 1488 708Q1400 712 1350 709 1240 702 1226 656z" fill="url(#pocket)" />
    <path d="M1218 622 1481 603M1226 656Q1240 702 1350 709 1400 712 1487 708" stroke="#37474e" />

    {/* tool path */}
    <g stroke="#3bd3d6" strokeWidth="1.600">
      {sections.map(([x1, y1, x2, y2]) => (
        <path key={x1} d={`M${x1} ${y1} ${x2} ${y2}`} />
      ))}
      <path d="M1082 505v8M1099 735v10" strokeWidth="2" />
      <path d="M1085 520 1101 742" strokeWidth="1" />
    </g>
    <path d="M1119 743 1101 503M1076 504 1101 503 1470 475" stroke="#37d022" strokeWidth="1.600" />
    <path d="M1041 499Q1046 515 1057 516 1069 515 1077 504" stroke="#eadfe2" strokeWidth="1.300" />
    <path d="M1036 433 1041 499M1463 405 1468 450" stroke="#2a2796" strokeWidth="1.400" strokeDasharray="3 2" />
    <path d="M1466 454 1469 474" stroke="#e09a35" strokeWidth="1.500" />
    <path d="M1480 585.500h10l4 7h-13z" stroke="#5148c4" strokeWidth="1.300" />

    {/* coordinate systems */}
    <path d="M612 557 620 660" stroke="#2748dc" strokeWidth="2.500" />
    <path d="M617 615 620 660" stroke="#93a9f4" strokeWidth="2" />
    <path d="M612 556l4 20-5 2zM617 603l3 20-4 2z" fill="#5d7cf0" />
    <path d="M620 660 703 653" stroke="#f3a9a4" strokeWidth="2" />
    <path d="M725 651l-23-2 1 7zM672 654l-18-1-8 5 20 0z" fill="#f3a9a4" />
    <ellipse cx="617" cy="654" rx="4" ry="3" fill="#1f7a46" />
    <text x="616" y="553" fill="#2050e8">ZM</text>
    <text x="620" y="601" fill="#1e46cf">ZC</text>
    <text x="618" y="653" fill="#2f9c2c">YM</text>
    <text x="661" y="650" fill="#d5343c">XC</text>
    <text x="707" y="647" fill="#d5343c">XM</text>

    {/* view triad */}
    <path d="M254 922 280 921 281 948 255 949z" fill="#bdbdbd" />
    <path d="M254 948 252 915" stroke="#2c44c8" strokeWidth="3" />
    <path d="M251 904l5 14h-8z" fill="#2440dc" />
    <path d="M256 949 286 947" stroke="#d93636" strokeWidth="2" />
    <path d="M298 947l-16-2v5z" fill="#c92a2a" />
    <circle cx="254" cy="949" r="4.500" fill="#d8d0cc" />
    <text x="247" y="904" fill="#3448d8">Z</text>
    <text x="299" y="951" fill="#c43a3a">X</text>

    {/* rotate cursor */}
    <g stroke="#fff" strokeWidth="2">
      <path d="M1329 645a10.500 10.500 0 0 1 15-12M1349 641a10.500 10.500 0 0 1-15 12" />
      <path d="M1339 639.500v7M1335.500 643h7" strokeWidth="1" />
    </g>
    <path d="M1325.500 644h6.500l-3 4zM1346.500 642h7l-3.500-4z" fill="#fff" />
  </Scene>
);

const App = () => (
  <>
    <GlobalStyle />
    <Window>
      <TitleBar>
        <QuickAccess>
          <CaretButton aria-label="撤销列表"><Caret /></CaretButton>
          <Separator $h={18} $gap={3} />
          <QuickButton aria-label="剪切"><Icon name="cut" /></QuickButton>
          <QuickButton aria-label="复制"><Icon name="copy" /></QuickButton>
          <QuickButton aria-label="粘贴"><Icon name="paste" /></QuickButton>
          <QuickButton aria-label="移动"><Icon name="target" /></QuickButton>
          <Separator $h={18} $gap={2} />
          <QuickButton aria-label="坐标系"><Icon name="axisBox" /></QuickButton>
          <CaretButton $w={13} aria-label="坐标系列表"><Caret /></CaretButton>
          <Separator $h={18} $gap={3} />
          <QuickButton aria-label="触摸"><Icon name="hand" /></QuickButton>
          <Separator $h={18} $gap={3} />
          <QuickButton><Icon name="switchWin" />切换窗口</QuickButton>
          <Separator $h={0} $gap={3} />
          <QuickButton><Icon name="window" />窗口</QuickButton>
          <CaretButton $w={13} aria-label="窗口列表"><Caret /></CaretButton>
          <OverflowMark aria-label="工具条选项"><Caret /></OverflowMark>
        </QuickAccess>
        <AppTitle>NX 12 - 加工</AppTitle>
        <Brand>SIEMENS</Brand>
      </TitleBar>

      <TabBar>
        {tabs.map((text, i) => (
          <Tab key={text} $active={i === 0}>{text}</Tab>
        ))}
        <CommandFinder>
          <FinderInput aria-label="查找命令" placeholder="查找命令" />
          <Icon name="fit" />
        </CommandFinder>
      </TabBar>

      <Ribbon>
        {groups.map((group) => (
          <CommandGroup key={group.label} group={group} />
        ))}
        <MoreGroup>
          <MoreButton>
            <MoreFrame><Icon name="more" /></MoreFrame>
            更多
            <Caret />
          </MoreButton>
        </MoreGroup>
      </Ribbon>

      <SelectionBar>
        <ToolSet>
          <ToolButton $on aria-label="程序顺序视图"><Icon name="treeA" /></ToolButton>
          <ToolButton aria-label="机床视图"><Icon name="treeB" /></ToolButton>
          <ToolButton aria-label="几何视图"><Icon name="treeC" /></ToolButton>
          <ToolButton aria-label="加工方法视图"><Icon name="treeD" /></ToolButton>
        </ToolSet>
        <Separator $h={24} $gap={8} />
        <ToolSet>
          <ToolButton $on aria-label="显示刀轨"><Icon name="snapA" /></ToolButton>
          <ToolButton aria-label="显示工件"><Icon name="snapB" /></ToolButton>
        </ToolSet>
        <Separator $h={24} $gap={7} />
        <FilterSet $gap={9}>
          <SelectBox $w={133}>
            <Select aria-label="选择过滤器" defaultValue="无选择过滤器">
              <option>无选择过滤器</option>
            </Select>
            <Caret big />
          </SelectBox>
          <SelectBox $w={140}>
            <Select aria-label="选择范围" defaultValue="整个装配">
              <option>整个装配</option>
            </Select>
            <Caret big />
          </SelectBox>
        </FilterSet>
        <Tools items={pickTools} />
        <Separator $h={24} $gap={7} />
        <Tools items={viewTools} />
        <Separator $h={24} $gap={8} />
      </SelectionBar>

      <WorkArea>
        <Navigator>
          <NavHeader>
            <CutText>器 - 程序顺序</CutText>
            <RestoreIcon />
          </NavHeader>
          <OperationTree />
          <ScrollFoot>
            <Glyph viewBox="0 0 10 10" $size={8}>
              <path d="M3 1l4 4-4 4" stroke="#444" strokeWidth="2.200" />
            </Glyph>
          </ScrollFoot>
          <Splitter />
        </Navigator>
        <Graphics>
          <PartTabs>
            <PartTab>
              <Icon name="partMark" size={15} />
              daogan.prt
              <Icon name="pageMark" size={12} />
              <Icon name="close" size={10} />
            </PartTab>
          </PartTabs>
          <Viewport>
            <Model />
          </Viewport>
        </Graphics>
      </WorkArea>

      <StatusBar>
        <span>旋转视图</span>
        <span>绕 X-Y 旋转视图</span>
      </StatusBar>

      <Taskbar>
        <TaskApps>
          <TaskButton aria-label="Cortana">
            <Glyph viewBox="0 0 16 16"><circle cx="8" cy="8" r="6.500" stroke="#fff" strokeWidth="2" /></Glyph>
          </TaskButton>
          <TaskButton aria-label="任务视图">
            <Glyph viewBox="0 0 16 16">
              <path d="M1 0v3h10V0M1 5h10v6H1zM1 16v-3h10v3M14.500 0v4M14.500 9v7" stroke="#fff" strokeWidth="1.400" />
              <path d="M13 4.500h3v3h-3z" fill="#fff" />
            </Glyph>
          </TaskButton>
          <RunningButton $active aria-label="NX 12">
            <Glyph viewBox="0 0 24 24" $size={24}>
              <circle cx="11" cy="14" r="8.500" fill="#2aa7de" />
              <path d="M5 10q6-6 10 2t-2 10q-8 0-10-6z" fill="#8be0f2" />
              <path d="M10 22q8 0 9-9l-6 0z" fill="#1560b0" />
              <path d="M2 22q8 2 15-5 7-7 5-10-2-2-4 0" stroke="#dfc45e" strokeWidth="2" />
              <path d="M3 2l11-1-3 12z" fill="#d2284c" />
              <path d="M3 2l8 11-2-9z" fill="#8c1530" />
            </Glyph>
          </RunningButton>
          <RunningButton aria-label="文件资源管理器">
            <Glyph viewBox="0 0 24 20" $size={23}>
              <path d="M1 1h8l2 2h12v16H1z" fill="#e9b534" />
              <path d="M1 5h22v14H1z" fill="#f8d977" />
              <path d="M5 19v-8h14v8h-4v-4H9v4z" fill="#4a97b4" />
            </Glyph>
          </RunningButton>
        </TaskApps>
        <Tray>
          <TrayButton aria-label="USB 工具">
            <Glyph viewBox="0 0 16 16">
              <path d="M3 1h4v4H3zM9 1h4v4H9z" fill="#e8f4fa" />
              <path d="M4.500 2.500h1v1h-1zM10.500 2.500h1v1h-1z" fill="#345" />
              <rect x="1.500" y="5" width="13" height="10.500" rx="2" fill="#3aa3e0" />
              <path d="M8 14V7M5.500 8v2l2.500 2M10.500 8v1L8 11" stroke="#0c4c86" strokeWidth="1.200" />
            </Glyph>
          </TrayButton>
          <TrayButton aria-label="窗口">
            <Glyph viewBox="0 0 16 16">
              <path d="M5.500 5.500h9v9h-9zM3.500 10.500h-2v-9h9v2" stroke="#fff" strokeWidth="1.300" />
            </Glyph>
          </TrayButton>
          <TrayButton aria-label="安全">
            <Glyph viewBox="0 0 16 16">
              <path d="M1 2.500q7-2 14 0 0 9-7 13-7-4-7-13z" fill="#eef6fc" />
              <path d="M3 4q5-1 10 0 0 7-5 9.500Q3 11 3 4z" fill="#2f7fd0" />
              <path d="M4.500 6l3.500 3 3.500-3" stroke="#fff" strokeWidth="2" />
            </Glyph>
          </TrayButton>
          <TrayButton aria-label="麦克风">
            <Glyph viewBox="0 0 16 16">
              <rect x="5" y="0" width="6" height="11" rx="1.500" fill="#fff" />
              <path d="M3 8v4h10V8M8 12v3M5 15.500h6" stroke="#fff" strokeWidth="1.200" />
            </Glyph>
          </TrayButton>
          <TrayButton aria-label="摄像">
            <Glyph viewBox="0 0 16 16">
              <path d="M1 4h9v8H1z" fill="#9a9a94" />
              <path d="M0 6h11M2 3v9M5 4v9M8 4v8" stroke="#444" />
              <path d="M10 7l6-1v3l-6 1" fill="#b8b8b0" />
            </Glyph>
          </TrayButton>
          <TrayButton aria-label="NVIDIA">
            <Glyph viewBox="0 0 16 16">
              <path d="M1 1h14v14H1z" fill="#16210f" />
              <path d="M7 4h7v8H7z" fill="#76a83c" />
              <path d="M3 8q4-5 9 0-5 5-9 0z" fill="#16210f" stroke="#9cc46a" />
              <circle cx="8" cy="8" r="1.200" fill="#9cc46a" />
            </Glyph>
          </TrayButton>
          <TrayButton aria-label="安全删除硬件">
            <Glyph viewBox="0 0 16 16">
              <path d="M4.500.5h6v5h-6zM3 5.500h9V15H3zM11 13l2 2 3-4M6 2.500h1M8.500 2.500h1" stroke="#fff" strokeWidth="1.200" />
            </Glyph>
          </TrayButton>
          <TrayButton aria-label="网络">
            <Glyph viewBox="0 0 16 16">
              <path d="M6 3.500h9.500v8H3V8M7 14.500h6M9 11.500v3M.5 2.500h4v3h-4zM2.500 5.500V8" stroke="#fff" strokeWidth="1.200" />
            </Glyph>
          </TrayButton>
          <TrayButton aria-label="音量">
            <Glyph viewBox="0 0 16 16">
              <path d="M1 6h2l3-3v10l-3-3H1zM8.500 6q1.500 2 0 4M11 4q3 4 0 8M13.500 2.500q3.500 5.500 0 11" stroke="#fff" strokeWidth="1.200" />
            </Glyph>
          </TrayButton>
          <TrayButton>中</TrayButton>
          <TrayButton><ImeMode>五</ImeMode></TrayButton>
        </Tray>
      </Taskbar>

      <ContactTop>QQ：15632</ContactTop>
      <ContactBox>
        <ContactText>原创正版:</ContactText>
        <ContactText>QQ:156327228</ContactText>
        <ContactText>TEL:13416346406</ContactText>
      </ContactBox>
      <SpeedBall>
        13
        <svg width="30" height="30" viewBox="0 0 30 30" fill="none">
          <path d="M0 1.500A26 26 0 0 1 25 20" stroke="#37b8ae" strokeWidth="2" />
        </svg>
      </SpeedBall>
    </Window>
  </>
);

export default App;
